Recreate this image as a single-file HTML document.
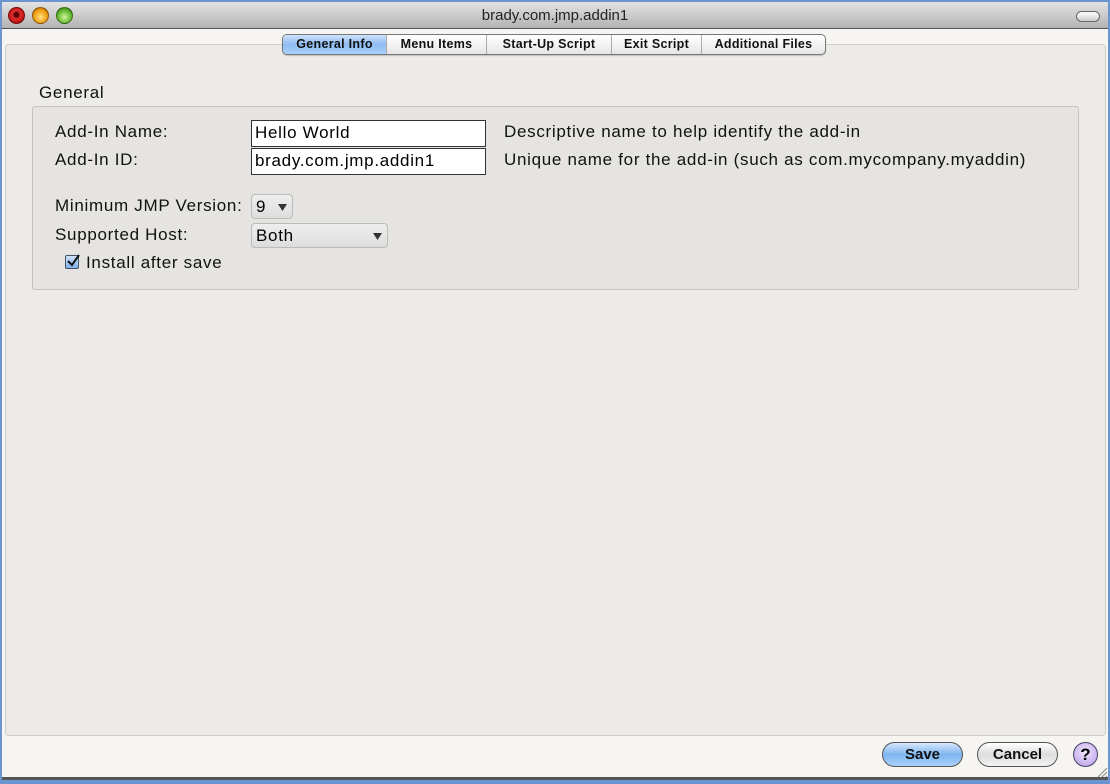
<!DOCTYPE html>
<html><head><meta charset="utf-8"><style>
*{margin:0;padding:0;box-sizing:border-box}
body{width:1110px;height:784px;background:#6a95d0;font-family:"Liberation Sans",Arial,sans-serif;position:relative;overflow:hidden}
.win{position:absolute;left:2px;top:2px;width:1106px;height:777px;background:#f6f5f1}
.title{position:absolute;left:0;top:0;width:1106px;height:27px;background:linear-gradient(#e3e3e3,#b3b3b3);border-bottom:1px solid #555;text-align:center;font-size:15px;line-height:27px;color:#222}
.dot{position:absolute;top:5px;width:17px;height:17px;border-radius:50%;border:1px solid rgba(0,0,0,.4)}
.pill{position:absolute;right:8px;top:9px;width:24px;height:11px;border-radius:6px;border:1px solid #666;background:linear-gradient(#fff,#ccc)}
.panel{position:absolute;left:3px;top:42px;width:1101px;height:692px;background:#ecebe7;border:1px solid #cfcdc8;border-radius:4px}
.tabs{position:absolute;left:282px;top:34px;height:21px;display:flex;border:1px solid #777;border-radius:5px;overflow:hidden;background:linear-gradient(#fff,#e6e6e6);box-shadow:0 1px 1px rgba(0,0,0,.2)}
.tabs div{font-size:12.5px;font-weight:bold;line-height:19px;text-align:center;border-left:1px solid #aaa;color:#111;letter-spacing:.3px}
.tabs div:first-child{border-left:0;background:linear-gradient(#cfe3fb,#8ebcf2 50%,#a9d0fb);}
.lbl{position:absolute;font-size:17px;color:#111;letter-spacing:.7px}
.group{position:absolute;left:32px;top:106px;width:1047px;height:184px;background:#e5e4e0;border:1px solid #c5c3be;border-radius:3px}
.field{position:absolute;left:251px;width:235px;height:27px;background:#fff;border:1px solid #333;font-size:17px;padding-left:3px;line-height:24px;color:#000;letter-spacing:.7px}
.sel{position:absolute;border:1px solid #bbb;border-radius:4px;background:linear-gradient(#eee,#ddd);font-size:17px;padding-left:4px;line-height:23px;letter-spacing:.7px}
.btn{position:absolute;top:742px;height:25px;border-radius:13px;border:1px solid #555;font-size:15px;text-align:center;line-height:23px;color:#111;font-weight:600}
</style></head><body>
<div class="win">
<div class="title">brady.com.jmp.addin1
<div class="dot" style="left:6px;background:radial-gradient(circle at 50% 45%,#5a0000 0 20%,#e03030 35%,#c51414 65%,#7a0d0d)"></div>
<div class="dot" style="left:30px;background:radial-gradient(circle at 50% 60%,#ffe37a,#f09a10 60%,#a55a00)"></div>
<div class="dot" style="left:54px;background:radial-gradient(circle at 50% 60%,#d0f59a,#5eb52a 60%,#2e6a10)"></div>
<div class="pill"></div></div>
<div class="panel"></div>
</div>
<div class="tabs"><div style="width:103px">General Info</div><div style="width:100px">Menu Items</div><div style="width:125px">Start-Up Script</div><div style="width:90px">Exit Script</div><div style="width:124px">Additional Files</div></div>
<div class="lbl" style="left:39px;top:83px">General</div>
<div class="group"></div>
<div class="lbl" style="left:55px;top:122px">Add-In Name:</div>
<div class="lbl" style="left:55px;top:150px">Add-In ID:</div>
<div class="field" style="top:120px">Hello World</div>
<div class="field" style="top:148px">brady.com.jmp.addin1</div>
<div class="lbl" style="left:504px;top:122px">Descriptive name to help identify the add-in</div>
<div class="lbl" style="left:504px;top:150px">Unique name for the add-in (such as com.mycompany.myaddin)</div>
<div class="lbl" style="left:55px;top:196px">Minimum JMP Version:</div>
<div class="sel" style="left:251px;top:194px;width:42px;height:25px">9<svg style="position:absolute;right:5px;top:9px" width="9" height="7"><path d="M0 0H9L4.5 7Z" fill="#333"/></svg></div>
<div class="lbl" style="left:55px;top:225px">Supported Host:</div>
<div class="sel" style="left:251px;top:223px;width:137px;height:25px">Both<svg style="position:absolute;right:5px;top:9px" width="9" height="7"><path d="M0 0H9L4.5 7Z" fill="#333"/></svg></div>
<div style="position:absolute;left:65px;top:255px;width:14px;height:14px;border:1px solid #456;border-radius:2px;background:linear-gradient(#cfe2fb,#7fb0ec)"><svg width="14" height="14" style="position:absolute;left:0;top:-2px"><path d="M2 7L6 11L13 1" stroke="#111" stroke-width="2" fill="none"/></svg></div>
<div class="lbl" style="left:86px;top:253px">Install after save</div>
<div class="btn" style="left:882px;width:81px;background:linear-gradient(#d6e8fd,#7fb5f0 50%,#a8d2fc)">Save</div>
<div class="btn" style="left:977px;width:81px;background:linear-gradient(#fff,#ddd 50%,#f3f3f3)">Cancel</div>
<div style="position:absolute;left:1073px;top:742px;width:25px;height:25px;border-radius:50%;border:1px solid #446;background:radial-gradient(circle at 50% 40%,#f0e6ff,#b79ae6);font-weight:bold;font-size:17px;text-align:center;line-height:23px">?</div>
<svg style="position:absolute;left:1096px;top:766px" width="12" height="12"><path d="M2 11L11 2M6 11L11 6M10 11L11 10" stroke="#888" stroke-width="1"/></svg>
<div style="position:absolute;left:2px;top:777px;width:1106px;height:3px;background:#555"></div>
</body></html>
